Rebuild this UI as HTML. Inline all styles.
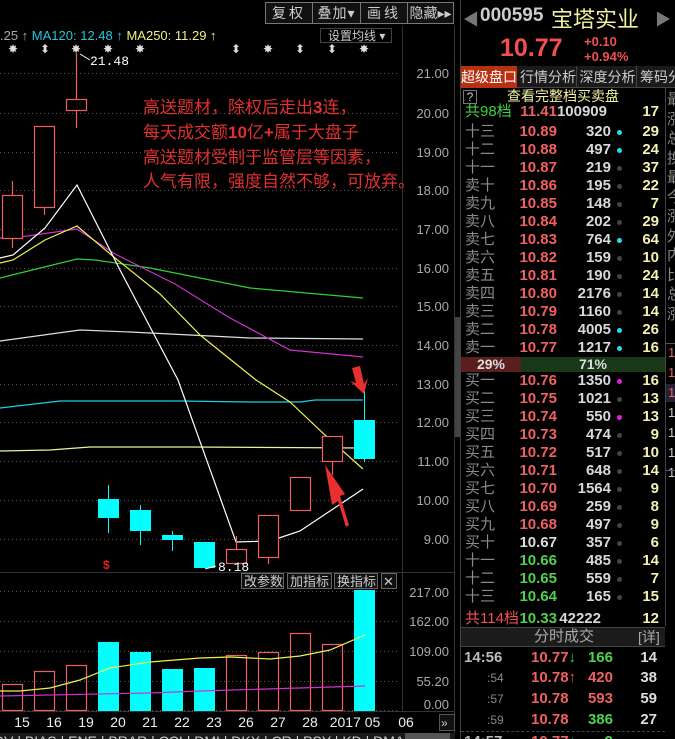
<!DOCTYPE html>
<html style="height:739px;overflow:hidden"><head><meta charset="utf-8">
<style>
*{margin:0;padding:0;box-sizing:border-box}
html,body{width:675px;height:739px;overflow:hidden}
body{background:#000;position:relative;font-family:"Liberation Sans","Noto Sans CJK SC",sans-serif;color:#ccc}
.a{position:absolute;white-space:nowrap}
.btn{position:absolute;top:2px;height:22px;border:1px solid #777;background:#111;color:#ccc;font-size:14px;line-height:20px;text-align:center;letter-spacing:3px}
.row{position:absolute;left:461px;width:204px;height:18px;font-size:15px;line-height:18px;font-weight:bold}
.row .l{position:absolute;left:4px;color:#8a8a8a;font-weight:normal;font-size:15px}
.row .p{position:absolute;right:108px;color:#f06060}
.row .v{position:absolute;right:54px;color:#d8d8d8}
.row .d{position:absolute;left:156px;top:7px;width:5px;height:5px;border-radius:50%;background:#444}
.row .c{position:absolute;right:6px;color:#f4f0b0}
.cy{background:#22e0f0!important}.mg{background:#e020e0!important}
.tk{position:absolute;left:461px;width:204px;height:20px;font-size:15px;line-height:20px;font-weight:bold}
.tk .t{position:absolute;left:3px;color:#bbb}
.tk .p{position:absolute;left:70px;color:#f06060}
.tk .v{position:absolute;right:52px}
.tk .c{position:absolute;right:8px;color:#ddd}
</style></head><body>

<svg class="a" style="left:0;top:0" width="460" height="739" viewBox="0 0 460 739">
<g stroke="#555" stroke-dasharray="1,3" stroke-width="1">
<line x1="0" y1="73.5" x2="400" y2="73.5"/><line x1="0" y1="113.5" x2="400" y2="113.5"/><line x1="0" y1="152.5" x2="400" y2="152.5"/><line x1="0" y1="190.5" x2="400" y2="190.5"/><line x1="0" y1="229.5" x2="400" y2="229.5"/><line x1="0" y1="268.5" x2="400" y2="268.5"/><line x1="0" y1="306.5" x2="400" y2="306.5"/><line x1="0" y1="345.5" x2="400" y2="345.5"/><line x1="0" y1="384.5" x2="400" y2="384.5"/><line x1="0" y1="422.5" x2="400" y2="422.5"/><line x1="0" y1="461.5" x2="400" y2="461.5"/><line x1="0" y1="500.5" x2="400" y2="500.5"/><line x1="0" y1="539.5" x2="400" y2="539.5"/>
<line x1="0" y1="591.5" x2="400" y2="591.5"/><line x1="0" y1="621.5" x2="400" y2="621.5"/><line x1="0" y1="651.5" x2="400" y2="651.5"/><line x1="0" y1="681.5" x2="400" y2="681.5"/><line x1="0" y1="710.5" x2="400" y2="710.5"/>
</g>
<line x1="402.5" y1="26" x2="402.5" y2="712" stroke="#333"/>
<line x1="0" y1="572.5" x2="455" y2="572.5" stroke="#333"/>
<line x1="0" y1="711.5" x2="455" y2="711.5" stroke="#333"/>
<line x1="454.5" y1="26" x2="454.5" y2="739" stroke="#333"/>
<rect x="455" y="317" width="5" height="120" fill="#444"/>
<g fill="#aaa" font-size="13" text-anchor="end" font-family="Liberation Sans,sans-serif">
<text x="449" y="78">21.00</text><text x="449" y="118">20.00</text><text x="449" y="157">19.00</text><text x="449" y="195">18.00</text><text x="449" y="234">17.00</text><text x="449" y="273">16.00</text><text x="449" y="311">15.00</text><text x="449" y="350">14.00</text><text x="449" y="389">13.00</text><text x="449" y="427">12.00</text><text x="449" y="466">11.00</text><text x="449" y="505">10.00</text><text x="449" y="544">9.00</text>
<text x="449" y="597">217.00</text><text x="449" y="626">162.00</text><text x="449" y="656">109.00</text><text x="449" y="686">55.20</text><text x="449" y="709">0.00</text>
</g>
<g fill="none" stroke-width="1.2">
<polyline stroke="#e0e0e0" points="0,341 80,330 130,332 250,338 363,339"/>
<polyline stroke="#20d0e0" points="0,408 60,401 180,401 250,402 300,402 315,400 363,400"/>
<polyline stroke="#f0f0a0" points="0,451 50,450 90,447 190,447 363,448"/>
<polyline stroke="#30d030" points="0,278 20,273 77,259 95,260 150,268 250,288 363,298"/>
<polyline stroke="#d030d0" points="0,238 20,237 77,229 115,254 175,284 230,318 290,350 363,357"/>
<polyline stroke="#f0f050" points="0,263 13,260 45,240 77,226 115,258 160,294 200,335 256,380 290,402 325,435 363,469"/>
<polyline stroke="#fff" points="0,258 13,255 45,228 77,185 120,270 178,380 236,542 270,541 300,531 363,489"/>
</g>
<g stroke="#f06060" fill="#000" stroke-width="1.2">
<line x1="12.5" y1="181" x2="12.5" y2="248"/><rect x="2.5" y="195.5" width="20" height="43"/>
<line x1="44.5" y1="200" x2="44.5" y2="215"/><rect x="34.5" y="126.5" width="20" height="81"/>
<line x1="76.5" y1="53" x2="76.5" y2="128"/><rect x="66.5" y="99.5" width="20" height="11"/>
<line x1="236.5" y1="536" x2="236.5" y2="563"/><rect x="226.5" y="549.5" width="20" height="14"/>
<line x1="268.5" y1="557" x2="268.5" y2="564"/><rect x="258.5" y="515.5" width="20" height="42"/>
<rect x="290.5" y="477.5" width="20" height="33"/>
<line x1="332.5" y1="461" x2="332.5" y2="475"/><rect x="322.5" y="436.5" width="20" height="25"/>
</g>
<g fill="#00ffff" stroke="#00ffff">
<line x1="108.5" y1="485" x2="108.5" y2="533"/><rect x="98" y="499" width="21" height="19" stroke="none"/>
<line x1="140.5" y1="505" x2="140.5" y2="545"/><rect x="130" y="510" width="21" height="21" stroke="none"/>
<line x1="172.5" y1="531" x2="172.5" y2="551"/><rect x="162" y="535" width="21" height="5" stroke="none"/>
<rect x="194" y="542" width="21" height="26" stroke="none"/>
<line x1="364.5" y1="391" x2="364.5" y2="462"/><rect x="354" y="420" width="21" height="39" stroke="none"/>
</g>
<g font-size="13" fill="#fff" font-family="Liberation Mono,monospace">
<text x="90" y="65">21.48</text><text x="218" y="571">8.18</text></g>
<path d="M80 54 L90 60" stroke="#fff"/><path d="M205 569 L216 566" stroke="#fff"/>
<text x="103" y="569" fill="#e02020" font-size="12" font-weight="bold">$</text>
<g fill="#e83030">
<path d="M352 368 L360 366 L364 384 L368 378 L364 394 L350 381 L356 383 Z"/>
<path d="M346 527 L338 501 L332 505 L325 465 L345 494 L340 496 L349 525 Z"/>
</g>
<g fill="#e03030" font-size="17" font-family="Liberation Sans,Noto Sans CJK SC,sans-serif">
<text x="143" y="113">高送题材，除权后走出<tspan font-weight="bold">3</tspan>连，</text>
<text x="143" y="138">每天成交额<tspan font-weight="bold">10</tspan>亿<tspan font-weight="bold">+</tspan>属于大盘子</text>
<text x="143" y="163">高送题材受制于监管层等因素，</text>
<text x="143" y="187">人气有限，强度自然不够，可放弃。</text>
</g>
<g fill="#ddd" font-size="12">
<text x="8" y="53">✸</text><text x="40" y="53">⬍</text><text x="71" y="53">✸</text><text x="103" y="53">✸</text><text x="135" y="53">✸</text><text x="231" y="53">⬍</text><text x="263" y="53">✸</text><text x="295" y="53">⬍</text><text x="327" y="53">⬍</text><text x="359" y="53">✸</text></g>
<g font-size="13" font-family="Liberation Sans,sans-serif">
<text x="0" y="40" fill="#aaa">.25 ↑ <tspan fill="#20c8e0">MA120: 12.48 ↑ </tspan><tspan fill="#f0f080">MA250: 11.29 ↑</tspan></text></g>
<rect x="320.5" y="28.5" width="71" height="14" fill="#000" stroke="#444"/>
<text x="328" y="40" fill="#ccc" font-size="12">设置均线 ▾</text>
<g stroke="#f06060" fill="none" stroke-width="1.2">
<rect x="2.5" y="684.5" width="20" height="26"/><rect x="34.5" y="671.5" width="20" height="39"/><rect x="66.5" y="665.5" width="20" height="45"/>
<rect x="226.5" y="655.5" width="20" height="55"/><rect x="258.5" y="652.5" width="20" height="58"/><rect x="290.5" y="633.5" width="20" height="77"/><rect x="322.5" y="644.5" width="20" height="66"/></g>
<g fill="#00ffff"><rect x="98" y="642" width="21" height="69"/><rect x="130" y="652" width="21" height="59"/><rect x="162" y="669" width="21" height="42"/><rect x="194" y="668" width="21" height="43"/><rect x="354" y="590" width="21" height="121"/></g>
<polyline fill="none" stroke="#f0f050" stroke-width="1.2" points="0,691 20,691 50,688 80,680 110,668 150,662 200,658 230,657 270,659 300,656 330,650 365,635"/>
<polyline fill="none" stroke="#d030d0" stroke-width="1.2" points="0,696 150,693 200,691 365,686"/>
<g font-size="12" fill="#ccc" stroke="#666"><rect x="241.5" y="573.5" width="42" height="15" fill="#111"/><rect x="287.5" y="573.5" width="44" height="15" fill="#111"/><rect x="334.5" y="573.5" width="43" height="15" fill="#111"/><rect x="381.5" y="573.5" width="15" height="15" fill="#111"/></g>
<g font-size="13" fill="#ccc"><text x="244" y="586">改参数</text><text x="290" y="586">加指标</text><text x="337" y="586">换指标</text><text x="383" y="586">✕</text></g>
<g font-size="14" fill="#eee" text-anchor="middle"><text x="22" y="727">15</text><text x="54" y="727">16</text><text x="86" y="727">19</text><text x="118" y="727">20</text><text x="150" y="727">21</text><text x="182" y="727">22</text><text x="214" y="727">23</text><text x="246" y="727">26</text><text x="278" y="727">27</text><text x="310" y="727">28</text><text x="355" y="727">2017 05</text><text x="406" y="727">06</text></g>
<rect x="439.5" y="714.5" width="15" height="16" fill="#111" stroke="#555"/><text x="441" y="727" fill="#ccc" font-size="12">»</text>
<rect x="0" y="733" width="455" height="6" fill="#1a1a1a"/>
<g font-size="14" fill="#ccc"><text x="-6" y="746">DV | BIAS | ENE | BRAR | CCI | DMI | DKX | CR | PSY | KD | DMA | 更多</text></g>
<rect x="405" y="733" width="45" height="6" fill="#555"/>
</svg>

<div class="a" style="left:460px;top:0;width:1px;height:739px;background:#444"></div>
<div class="btn" style="left:265px;width:48px">复权</div>
<div class="btn" style="left:312px;width:49px;letter-spacing:1px">叠加▾</div>
<div class="btn" style="left:360px;width:48px">画线</div>
<div class="btn" style="left:407px;width:47px;letter-spacing:0">隐藏▸▸</div>

<div class="a" style="left:463px;top:6px;color:#777;font-size:16px">◀</div>
<div class="a" style="left:480px;top:5px;color:#ccc;font-size:19px;font-weight:bold">000595</div>
<div class="a" style="left:551px;top:2px;color:#f0f0a0;font-size:22px">宝塔实业</div>
<div class="a" style="left:655px;top:6px;color:#777;font-size:16px">▶</div>
<div class="a" style="left:500px;top:34px;color:#f05050;font-size:25px;font-weight:bold">10.77</div>
<div class="a" style="left:584px;top:34px;color:#f05050;font-size:13px;font-weight:bold;line-height:15px">+0.10<br>+0.94%</div>
<div class="a" style="left:461px;top:66px;width:214px;height:22px;background:#1a1a1a;border-bottom:1px solid #444"></div>
<div class="a" style="left:461px;top:66px;width:56px;height:22px;background:#b83010;color:#fff;font-size:14px;line-height:22px;text-align:center">超级盘口</div>
<div class="a" style="left:520px;top:66px;width:57px;height:22px;color:#ccc;font-size:14px;line-height:22px;text-align:center;border-right:1px solid #444">行情分析</div>
<div class="a" style="left:579px;top:66px;width:58px;height:22px;color:#ccc;font-size:14px;line-height:22px;text-align:center;border-right:1px solid #444">深度分析</div>
<div class="a" style="left:640px;top:66px;color:#ccc;font-size:14px;line-height:22px">筹码分</div>
<div class="a" style="left:665px;top:88px;width:1px;height:538px;background:#444"></div>
<div class="a" style="left:667px;top:90px;color:#888;font-size:15px;line-height:19.5px;width:8px;overflow:hidden">最<br>涨<br>总<br>换<br>最<br>今<br>涨<br>外<br>内<br>比<br>总<br>涨</div>
<div class="a" style="left:666px;top:343px;width:9px;height:1px;background:#555"></div>
<div class="a" style="left:666px;top:384px;width:9px;height:18px;background:#223"></div>
<div class="a" style="left:668px;top:343px;color:#f06060;font-size:13px;line-height:20px">1<br>1<br>1<br><span style="color:#ccc">1<br>1<br>1<br>1</span></div>
<div class="a" style="left:666px;top:470px;width:9px;height:1px;background:#555"></div>

<div class="a" style="left:463px;top:90px;width:14px;height:14px;border:1px solid #777;color:#ccc;font-size:12px;line-height:12px;text-align:center">?</div>
<div class="a" style="left:507px;top:86px;color:#f0f0a0;font-size:14px">查看完整档买卖盘</div>
<div class="row" style="top:103px"><span class="l" style="color:#40d040">共98档</span><span class="p">11.41</span><span class="v" style="right:58px">100909</span><span class="c">17</span></div>

<div class="row" style="top:123px"><span class="l">十三</span><span class="p">10.89</span><span class="v">320</span><span class="d cy"></span><span class="c">29</span></div>
<div class="row" style="top:141px"><span class="l">十二</span><span class="p">10.88</span><span class="v">497</span><span class="d cy"></span><span class="c">24</span></div>
<div class="row" style="top:159px"><span class="l">十一</span><span class="p">10.87</span><span class="v">219</span><span class="d"></span><span class="c">37</span></div>
<div class="row" style="top:177px"><span class="l">卖十</span><span class="p">10.86</span><span class="v">195</span><span class="d"></span><span class="c">22</span></div>
<div class="row" style="top:195px"><span class="l">卖九</span><span class="p">10.85</span><span class="v">148</span><span class="d"></span><span class="c">7</span></div>
<div class="row" style="top:213px"><span class="l">卖八</span><span class="p">10.84</span><span class="v">202</span><span class="d"></span><span class="c">29</span></div>
<div class="row" style="top:231px"><span class="l">卖七</span><span class="p">10.83</span><span class="v">764</span><span class="d cy"></span><span class="c">64</span></div>
<div class="row" style="top:249px"><span class="l">卖六</span><span class="p">10.82</span><span class="v">159</span><span class="d"></span><span class="c">10</span></div>
<div class="row" style="top:267px"><span class="l">卖五</span><span class="p">10.81</span><span class="v">190</span><span class="d"></span><span class="c">24</span></div>
<div class="row" style="top:285px"><span class="l">卖四</span><span class="p">10.80</span><span class="v">2176</span><span class="d"></span><span class="c">14</span></div>
<div class="row" style="top:303px"><span class="l">卖三</span><span class="p">10.79</span><span class="v">1160</span><span class="d"></span><span class="c">14</span></div>
<div class="row" style="top:321px"><span class="l">卖二</span><span class="p">10.78</span><span class="v">4005</span><span class="d cy"></span><span class="c">26</span></div>
<div class="row" style="top:339px"><span class="l">卖一</span><span class="p">10.77</span><span class="v">1217</span><span class="d cy"></span><span class="c">16</span></div>

<div class="a" style="left:461px;top:357px;width:60px;height:15px;background:#5a1e1e;color:#ddd;font-size:14px;line-height:15px;font-weight:bold;text-align:center">29%</div>
<div class="a" style="left:521px;top:357px;width:144px;height:15px;background:#183818;color:#ddd;font-size:14px;line-height:15px;font-weight:bold;text-align:center">71%</div>

<div class="row" style="top:372px"><span class="l">买一</span><span class="p">10.76</span><span class="v">1350</span><span class="d mg"></span><span class="c">16</span></div>
<div class="row" style="top:390px"><span class="l">买二</span><span class="p">10.75</span><span class="v">1021</span><span class="d"></span><span class="c">13</span></div>
<div class="row" style="top:408px"><span class="l">买三</span><span class="p">10.74</span><span class="v">550</span><span class="d mg"></span><span class="c">13</span></div>
<div class="row" style="top:426px"><span class="l">买四</span><span class="p">10.73</span><span class="v">474</span><span class="d"></span><span class="c">9</span></div>
<div class="row" style="top:444px"><span class="l">买五</span><span class="p">10.72</span><span class="v">517</span><span class="d"></span><span class="c">10</span></div>
<div class="row" style="top:462px"><span class="l">买六</span><span class="p">10.71</span><span class="v">648</span><span class="d"></span><span class="c">14</span></div>
<div class="row" style="top:480px"><span class="l">买七</span><span class="p">10.70</span><span class="v">1564</span><span class="d"></span><span class="c">9</span></div>
<div class="row" style="top:498px"><span class="l">买八</span><span class="p">10.69</span><span class="v">259</span><span class="d"></span><span class="c">8</span></div>
<div class="row" style="top:516px"><span class="l">买九</span><span class="p">10.68</span><span class="v">497</span><span class="d"></span><span class="c">9</span></div>
<div class="row" style="top:534px"><span class="l">买十</span><span class="p" style="color:#ddd">10.67</span><span class="v">357</span><span class="d"></span><span class="c">6</span></div>
<div class="row" style="top:552px"><span class="l">十一</span><span class="p" style="color:#50d050">10.66</span><span class="v">485</span><span class="d"></span><span class="c">14</span></div>
<div class="row" style="top:570px"><span class="l">十二</span><span class="p" style="color:#50d050">10.65</span><span class="v">559</span><span class="d"></span><span class="c">7</span></div>
<div class="row" style="top:588px"><span class="l">十三</span><span class="p" style="color:#50d050">10.64</span><span class="v">165</span><span class="d"></span><span class="c">15</span></div>
<div class="row" style="top:610px"><span class="l" style="color:#f05050">共114档</span><span class="p" style="color:#50d050">10.33</span><span class="v" style="right:64px">42222</span><span class="c">12</span></div>

<div class="a" style="left:461px;top:627px;width:204px;height:20px;background:#1c1c1c;border-top:1px solid #444;border-bottom:1px solid #444"></div>
<div class="a" style="left:534px;top:628px;color:#aaa;font-size:15px;line-height:18px">分时成交</div>
<div class="a" style="left:638px;top:628px;color:#aaa;font-size:14px;line-height:18px">[详]</div>

<div class="tk" style="top:648px"><span class="t">14:56</span><span class="p">10.77<span style="color:#30d030">↓</span></span><span class="v" style="color:#50d050">166</span><span class="c">14</span></div>
<div class="tk" style="top:668px"><span class="t" style="left:26px;font-weight:normal;color:#888;font-size:12px">:54</span><span class="p">10.78<span style="color:#f05050">↑</span></span><span class="v" style="color:#f06060">420</span><span class="c">38</span></div>
<div class="tk" style="top:689px"><span class="t" style="left:26px;font-weight:normal;color:#888;font-size:12px">:57</span><span class="p">10.78</span><span class="v" style="color:#f06060">593</span><span class="c">59</span></div>
<div class="tk" style="top:710px"><span class="t" style="left:26px;font-weight:normal;color:#888;font-size:12px">:59</span><span class="p">10.78</span><span class="v" style="color:#50d050">386</span><span class="c">27</span></div>
<div class="a" style="left:461px;top:731px;width:204px;border-top:1px dashed #444"></div>
<div class="tk" style="top:732px;height:7px;overflow:hidden"><span class="t">14:57</span><span class="p">10.77<span style="color:#30d030">↓</span></span><span class="v" style="color:#50d050">9</span></div>
</body></html>
